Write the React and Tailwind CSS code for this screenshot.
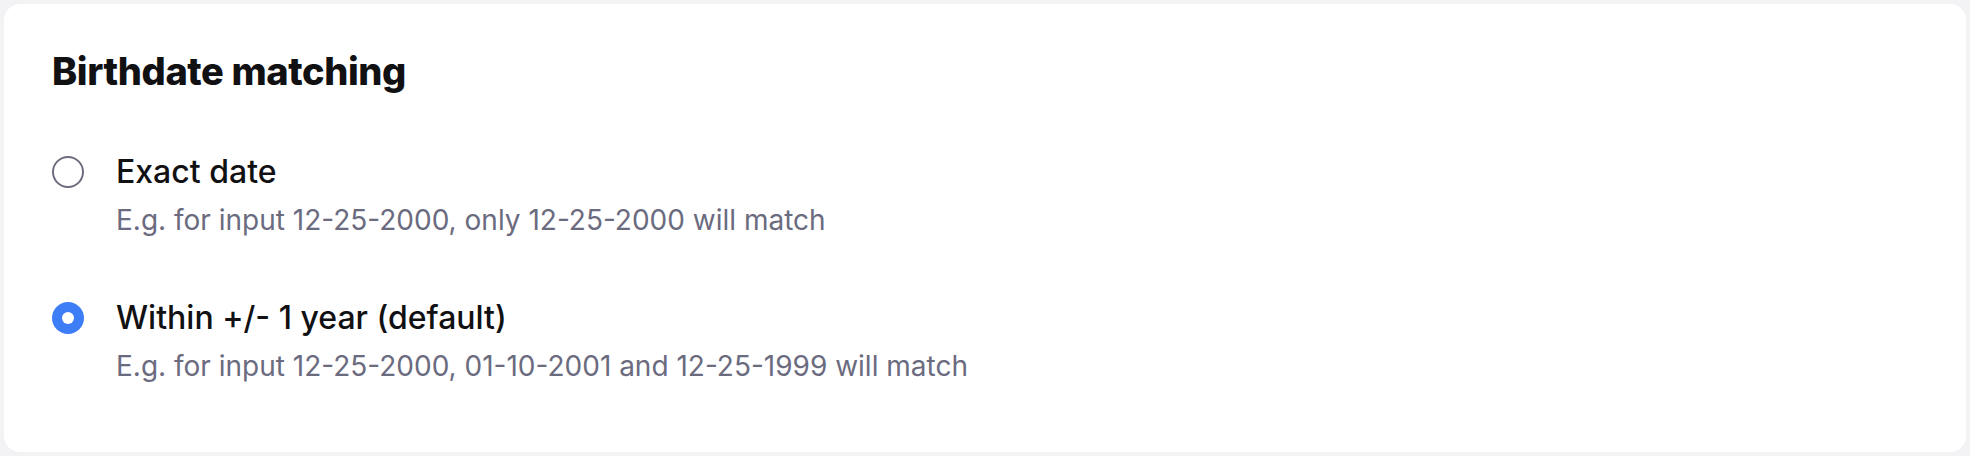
import React from 'react';

const options = [
  {
    id: 'exact',
    label: 'Exact date',
    hint: 'E.g. for input 12-25-2000, only 12-25-2000 will match',
  },
  {
    id: 'year',
    label: 'Within +/- 1 year (default)',
    hint: 'E.g. for input 12-25-2000, 01-10-2001 and 12-25-1999 will match',
  },
];

const Radio = ({ checked }) => (
  <span
    className={`flex h-8 w-8 flex-shrink-0 items-center justify-center rounded-full ${
      checked ? 'bg-[#3d7ef6]' : 'border-2 border-[#6e6e82] bg-white'
    }`}
  >
    {checked && <span className="h-3 w-3 rounded-full bg-white" />}
  </span>
);

export default function App() {
  const [value, setValue] = React.useState('year');

  return (
    <div className="flex h-screen flex-col bg-[#f3f3f5] p-1" style={{ fontFamily: 'Inter, "Noto Sans", sans-serif' }}>
      <div className="flex-1 rounded-2xl bg-white px-12 pt-[45px]">
        <h2 className="text-[38px] leading-[44px] font-extrabold tracking-[-0.4px] text-[#111114]">
          Birthdate matching
        </h2>

        <div className="mt-[59px] flex flex-col gap-[60px]">
          {options.map((opt) => (
            <label
              key={opt.id}
              className="flex cursor-pointer items-start gap-8"
              onClick={() => setValue(opt.id)}
            >
              <span className="flex h-10 items-center">
                <Radio checked={value === opt.id} />
              </span>
              <span className="flex flex-col">
                <span className="text-[32px] leading-10 font-medium text-[#111114]">
                  {opt.label}
                </span>
                <span className="mt-[10px] text-[28px] leading-9 text-[#6b6b80]">
                  {opt.hint}
                </span>
              </span>
            </label>
          ))}
        </div>
      </div>
    </div>
  );
}
